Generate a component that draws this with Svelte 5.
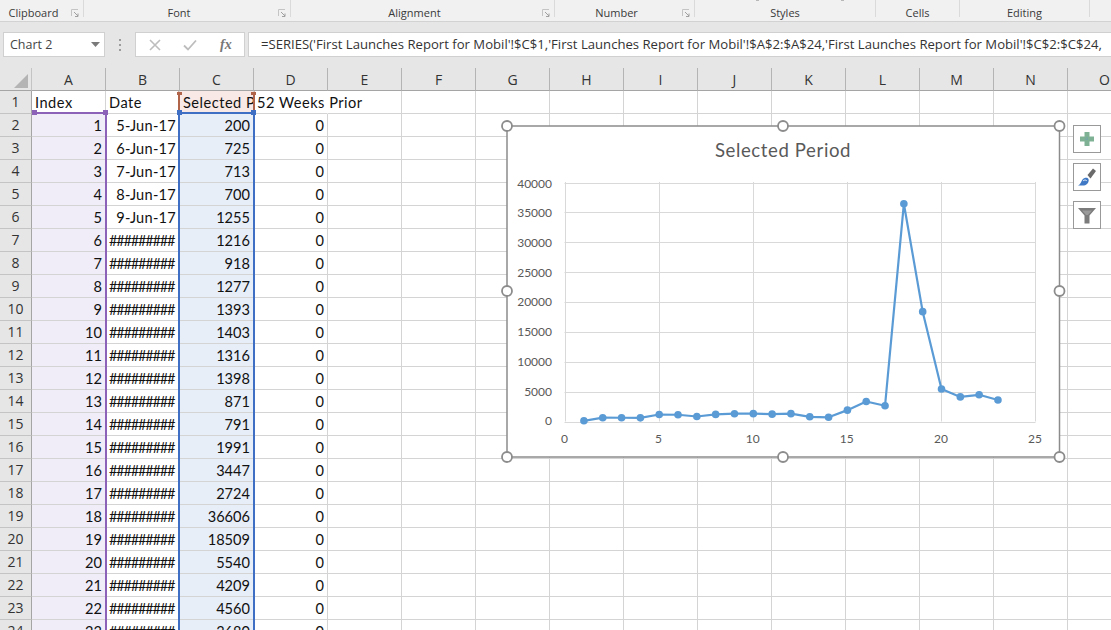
<script lang="ts">
	const groups = [
		{ name: 'Clipboard', width: 84, launcher: true },
		{ name: 'Font', width: 207, launcher: true },
		{ name: 'Alignment', width: 264, launcher: true },
		{ name: 'Number', width: 140, launcher: true },
		{ name: 'Styles', width: 181, launcher: false },
		{ name: 'Cells', width: 84, launcher: false },
		{ name: 'Editing', width: 130, launcher: false }
	];

	const columns = 'ABCDEFGHIJKLMNO'.split('');
	const blanks = columns.slice(4);

	const values = [
		200, 725, 713, 700, 1255, 1216, 918, 1277, 1393, 1403, 1316, 1398, 871, 791, 1991, 3447, 2724,
		36606, 18509, 5540, 4209, 4560, 3680
	];
	const dates = ['5-Jun-17', '6-Jun-17', '7-Jun-17', '8-Jun-17', '9-Jun-17'];

	const formula =
		"=SERIES('First Launches Report for Mobil'!$C$1,'First Launches Report for Mobil'!$A$2:$A$24,'First Launches Report for Mobil'!$C$2:$C$24,";

	// chart scale, in page pixels
	const xAt = (v: number) => 564.5 + (v * 470.5) / 25;
	const yAt = (v: number) => 421.5 - (v * 239) / 40000;

	const yTicks = [0, 5000, 10000, 15000, 20000, 25000, 30000, 35000, 40000];
	const xTicks = [0, 5, 10, 15, 20, 25];
	const points = values.map((v, i) => ({ x: xAt(i + 1) + 0.6, y: 422 - (v * 238.5) / 40000 }));
	const line = points.map((p) => `${p.x},${p.y}`).join(' ');
	const handles = [
		[507, 126],
		[783, 126],
		[1059.5, 126],
		[507, 291],
		[1059.5, 291],
		[507, 457],
		[783, 457],
		[1059.5, 457]
	];
</script>

<div class="excel">
	<div class="ribbon">
		{#each groups as group}
			<div class="group" class:has-launcher={group.launcher} style="width: {group.width}px">
				{group.name}
				{#if group.launcher}
					<svg class="launcher" width="8" height="8" viewBox="0 0 8 8">
						<path d="M0.5 7V0.5H7" fill="none" stroke="#c4c4c4" />
						<path d="M3 3L7 7M7 4.5V7.5H4" fill="none" stroke="#a0a0a0" />
					</svg>
				{/if}
				{#if group.name === 'Styles'}
					<i class="gallery-edge first"></i>
					<i class="gallery-edge second"></i>
				{/if}
			</div>
		{/each}
	</div>

	<div class="formula-row">
		<div class="name-box">
			<span>Chart 2</span>
			<svg width="9" height="5" viewBox="0 0 9 5"><path d="M0 0H9L4.5 5Z" fill="#7a7a7a" /></svg>
		</div>
		<div class="grip"><i></i><i></i><i></i></div>
		<div class="fx-buttons">
			<svg width="12" height="12" viewBox="0 0 12 12">
				<path d="M1 1L11 11M11 1L1 11" stroke="#bdbdbd" stroke-width="1.6" fill="none" />
			</svg>
			<svg width="14" height="12" viewBox="0 0 14 12">
				<path d="M1 6.5L5 10.5L13 1.5" stroke="#bdbdbd" stroke-width="1.8" fill="none" />
			</svg>
			<span class="fx">fx</span>
		</div>
		<div class="formula">{formula}</div>
	</div>

	<div class="sheet">
		<div class="corner">
			<svg width="14" height="14" viewBox="0 0 14 14"><path d="M14 0V14H0Z" fill="#b4b4b4" /></svg>
		</div>
		{#each columns as col}
			<div class="col-head">{col}</div>
		{/each}

		<div class="row-head">1</div>
		<div class="cell text">Index</div>
		<div class="cell text">Date</div>
		<div class="cell text c1">Selected Period</div>
		<div class="cell text spill">52 Weeks Prior</div>
		{#each blanks as col}
			<div class="cell"></div>
		{/each}

		{#each values as value, i}
			<div class="row-head">{i + 2}</div>
			<div class="cell num col-a">{i + 1}</div>
			<div class="cell num" class:hash={!dates[i]} class:date={dates[i]}>{dates[i] ?? '#########'}</div>
			<div class="cell num col-c">{value}</div>
			<div class="cell num">0</div>
			{#each blanks as col}
				<div class="cell"></div>
			{/each}
		{/each}

		<!-- range highlights that sit on top of the grid -->
		<div class="range purple"><b class="tl"></b><b class="tr"></b></div>
		<div class="range red"><b class="tl"></b><b class="tr"></b></div>
		<div class="range blue"><b class="tl"></b><b class="tr"></b></div>
	</div>

	<svg class="chart" width="567" height="347" viewBox="500 118 567 347">
		<rect x="507" y="126" width="552.5" height="331" fill="#fff" stroke="#8c8c8c" stroke-width="1.5" />
		<text class="title" x="783" y="157" text-anchor="middle">Selected Period</text>
		{#each yTicks as t}
			<line x1="564.5" x2="1035.5" y1={Math.round(yAt(t)) + 0.5} y2={Math.round(yAt(t)) + 0.5} class="grid" />
			<text class="tick" x="552" y={425.2 - (t * 237.5) / 40000} text-anchor="end">{t}</text>
		{/each}
		{#each xTicks as t}
			<line y1="182" y2="421.5" x1={Math.round(xAt(t)) + 0.5} x2={Math.round(xAt(t)) + 0.5} class="grid" />
			<text class="tick" x={xAt(t)} y="443" text-anchor="middle">{t}</text>
		{/each}
		<polyline points={line} fill="none" stroke="#5b9bd5" stroke-width="2.2" stroke-linejoin="round" />
		{#each points as p}
			<circle cx={p.x} cy={p.y} r="3.8" fill="#5b9bd5" />
		{/each}
		{#each handles as [x, y]}
			<circle cx={x} cy={y} r="5" fill="#fff" stroke="#8c8c8c" stroke-width="1.8" />
		{/each}
	</svg>

	<div class="chart-tools">
		<button aria-label="Chart Elements">
			<svg width="16" height="16" viewBox="0 0 16 16">
				<path d="M5.5 1H10.5V5.5H15V10.5H10.5V15H5.5V10.5H1V5.5H5.5Z" fill="#7fb295" />
				<path d="M8 6V10M6 8H10" stroke="#6f9fb0" stroke-width="1" stroke-dasharray="1 1" />
			</svg>
		</button>
		<button aria-label="Chart Styles">
			<svg width="20" height="20" viewBox="0 0 20 20">
				<path d="M10.5 8L16 1.5L19 4L13.5 11.5L12.5 10.5Z" fill="#6a6a6a" />
				<path d="M1 18.5C3.5 17.5 4 14.5 5.5 12.5C7 10.5 10.5 10 11.5 12C12.5 14.5 10 18.5 7 18.5Z" fill="#3f78c4" />
				<path d="M6 14C7 12.8 9 12.6 9.8 13.8" stroke="#dbe6f5" fill="none" />
			</svg>
		</button>
		<button aria-label="Chart Filters">
			<svg width="20" height="20" viewBox="0 0 20 20">
				<path d="M1 3H19L12.5 10.5V18.5H7.5V10.5Z" fill="#7b7b7b" />
				<path d="M5 5.5H15L11 10H9Z" fill="#9a9a9a" />
			</svg>
		</button>
	</div>
</div>

<style>
	:global(body) {
		margin: 0;
		overflow: hidden;
	}

	.excel {
		position: relative;
		width: 1111px;
		height: 630px;
		overflow: hidden;
		background: #fff;
		font-family: Lato, 'Liberation Sans', sans-serif;
	}

	.ribbon {
		display: flex;
		height: 21px;
		background: #f1f1f1;
		border-bottom: 1px solid #d2d2d2;
		font-family: 'Open Sans', sans-serif;
		font-size: 11px;
		color: #3a3a3a;
	}

	.group {
		position: relative;
		box-sizing: border-box;
		height: 17px;
		padding-top: 5px;
		line-height: 16px;
		text-align: center;
		border-right: 1px solid #dadada;
	}
	.group.has-launcher { padding-right: 16px; }

	.launcher {
		position: absolute;
		right: 4px;
		top: 9px;
	}

	.gallery-edge {
		position: absolute;
		top: 0;
		width: 3px;
		height: 1px;
		background: #b8b8b8;
	}
	.gallery-edge.first { left: 61px; }
	.gallery-edge.second { left: 146px; }

	.formula-row {
		display: flex;
		align-items: stretch;
		box-sizing: border-box;
		height: 46px;
		padding: 10px 0 11px 3px;
		background: #e6e6e6;
	}

	.name-box {
		display: flex;
		align-items: center;
		justify-content: space-between;
		box-sizing: border-box;
		width: 102px;
		padding: 0 4px 0 6px;
		background: #fff;
		border: 1px solid #d0d0d0;
		font-family: 'Open Sans', sans-serif;
		font-size: 12.5px;
		color: #444;
	}

	.grip {
		display: flex;
		flex-direction: column;
		justify-content: center;
		align-items: center;
		gap: 3px;
		width: 30px;
	}
	.grip i {
		width: 2px;
		height: 2px;
		background: #9c9c9c;
	}

	.fx-buttons {
		display: flex;
		align-items: center;
		gap: 22px;
		box-sizing: border-box;
		width: 110px;
		padding-left: 13px;
		background: #fff;
		border: 1px solid #d0d0d0;
	}

	.fx {
		margin-left: 1px;
		font-family: 'Liberation Serif', serif;
		font-style: italic;
		font-weight: bold;
		font-size: 14px;
		color: #777;
	}

	.formula {
		flex: 1;
		min-width: 0;
		margin-left: 3px;
		padding-left: 12px;
		line-height: 23px;
		white-space: nowrap;
		overflow: hidden;
		background: #fff;
		border: 1px solid #d0d0d0;
		border-right: none;
		font-family: 'Open Sans', sans-serif;
		font-size: 13.13px;
		color: #333;
	}

	.sheet {
		position: relative;
		display: grid;
		grid-template-columns: 32px repeat(15, 74px);
		grid-auto-rows: 23px;
		grid-template-rows: 23px 23px;
		width: 1142px;
		font-size: 14.6px;
		color: #111;
	}

	.corner {
		display: flex;
		justify-content: flex-end;
		align-items: flex-end;
		box-sizing: border-box;
		padding: 0 3px 2px 0;
		background: #e6e6e6;
		border-bottom: 1px solid #a5a5a5;
		border-right: 1px solid #c4c4c4;
	}

	.col-head {
		box-sizing: border-box;
		padding-top: 2px;
		text-align: center;
		background: #e6e6e6;
		border-right: 1px solid #b4b4b4;
		border-bottom: 1px solid #a5a5a5;
		font-family: 'Open Sans', sans-serif;
		font-size: 14px;
		line-height: 20px;
		color: #333;
	}

	.row-head {
		box-sizing: border-box;
		text-align: center;
		line-height: 22px;
		background: #e6e6e6;
		border-right: 1px solid #a5a5a5;
		border-bottom: 1px solid #c4c4c4;
		font-family: 'Open Sans', sans-serif;
		font-size: 14px;
		color: #333;
	}

	.cell {
		box-sizing: border-box;
		padding: 0 3px;
		line-height: 23px;
		white-space: nowrap;
		overflow: hidden;
		border-right: 1px solid #d4d4d4;
		border-bottom: 1px solid #d4d4d4;
	}
	.cell.text { letter-spacing: 0.5px; }
	.cell.num { text-align: right; }
	.cell.date { letter-spacing: 0.25px; }
	.cell.hash {
		padding-right: 5px;
		letter-spacing: -1.2px;
	}
	.cell.spill {
		overflow: visible;
		border-right-color: transparent;
	}
	.cell.col-a { background: #f0edf8; }
	.cell.col-c { background: #e8eef8; }
	.cell.c1 { background: #f8e8e6; }

	.range {
		position: absolute;
		box-sizing: border-box;
		border: 2px solid;
		pointer-events: none;
	}
	.range b {
		position: absolute;
		top: -4px;
		width: 5px;
		height: 5px;
		background: inherit;
	}
	.range .tl { left: -3px; }
	.range .tr { right: -3px; }

	.purple {
		left: 32px;
		top: 44px;
		width: 75px;
		height: 600px;
		border-color: #8b62b8;
		border-left: none;
		background: none;
	}
	.purple b { background: #8b62b8; }
	.purple .tl { left: 0; }

	.red {
		left: 178px;
		top: 23px;
		width: 77px;
		height: 22px;
		border-color: transparent #b0654a;
	}
	.red b { background: #b0654a; top: -1px; height: 3px; }

	.blue {
		left: 178px;
		top: 44px;
		width: 77px;
		height: 600px;
		border-color: #3f6fc4;
	}
	.blue b { background: #3f6fc4; }

	.chart {
		position: absolute;
		left: 500px;
		top: 118px;
		font-family: Lato, 'Liberation Sans', sans-serif;
	}

	.grid {
		stroke: #d9d9d9;
		stroke-width: 1;
	}
	.title {
		font-size: 18.6px;
		letter-spacing: 0.6px;
		fill: #595959;
	}
	.tick {
		font-size: 12px;
		fill: #595959;
	}

	.chart-tools {
		position: absolute;
		left: 1073px;
		top: 125px;
		display: flex;
		flex-direction: column;
		gap: 10px;
	}
	.chart-tools button {
		display: flex;
		align-items: center;
		justify-content: center;
		box-sizing: border-box;
		width: 28px;
		height: 28px;
		padding: 0;
		background: #fff;
		border: 1px solid #999;
	}
</style>
